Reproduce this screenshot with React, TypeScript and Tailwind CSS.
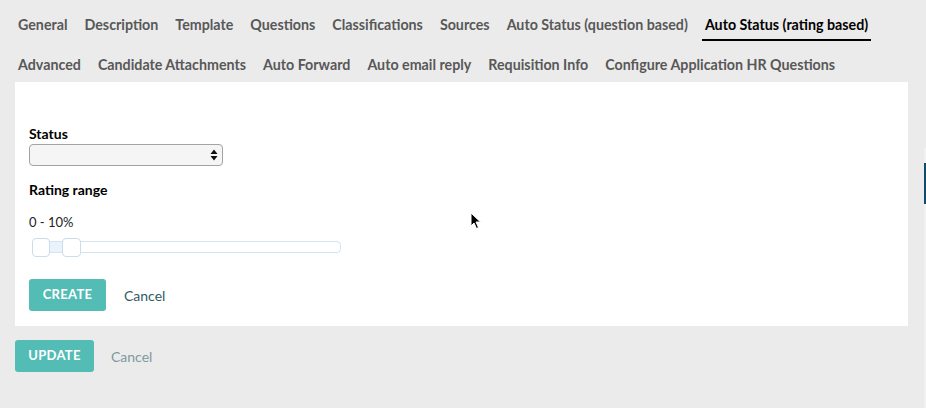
import { useState } from "react";

const rowOne = [
  "General",
  "Description",
  "Template",
  "Questions",
  "Classifications",
  "Sources",
  "Auto Status (question based)",
  "Auto Status (rating based)",
];

const rowTwo = [
  "Advanced",
  "Candidate Attachments",
  "Auto Forward",
  "Auto email reply",
  "Requisition Info",
  "Configure Application HR Questions",
];

function Tab({ label, active }: { label: string; active: boolean }) {
  return (
    <button
      type="button"
      className={`px-[3px] pb-[2px] leading-[24px] border-b-[2px] whitespace-nowrap ${
        active ? "text-black border-black" : "text-[#585858] border-transparent"
      }`}
    >
      {label}
    </button>
  );
}

function StatusSelect() {
  return (
    <div className="relative mt-[1px] w-[194px] h-[22px] rounded-[4px] border border-[#a3a3a3] bg-[#f5f5f5]">
      <svg className="absolute right-[4px] top-[4px]" width="8" height="12" viewBox="0 0 8 12">
        <path d="M4 0.5 L7.5 5 L0.5 5 Z" fill="#111" />
        <path d="M4 11.5 L7.5 7 L0.5 7 Z" fill="#111" />
      </svg>
    </div>
  );
}

function RangeSlider() {
  return (
    <div className="relative mt-[7px] ml-[3px] w-[309px] h-[19px]">
      <div className="absolute left-[1px] right-0 top-[3px] h-[12px] rounded-[4px] border border-[#d3e3f0] bg-white" />
      <div className="absolute left-[18px] w-[31px] top-[4px] h-[10px] bg-[#eaf3fb]" />
      <div className="absolute left-0 top-0 w-[18px] h-[19px] rounded-[4px] border border-[#cadced] bg-white" />
      <div className="absolute left-[30px] top-0 w-[19px] h-[19px] rounded-[4px] border border-[#cadced] bg-white" />
    </div>
  );
}

export default function App() {
  const [active] = useState("Auto Status (rating based)");

  return (
    <div
      className="relative w-[926px] h-[408px] overflow-hidden bg-[#ebebeb] text-[14px]"
      style={{ fontFamily: "Lato, 'Open Sans', sans-serif" }}
    >
      <nav className="pl-[15px] pt-[13px] font-bold text-[14.25px]">
        <div className="flex gap-x-[11px]">
          {rowOne.map((t) => (
            <Tab key={t} label={t} active={t === active} />
          ))}
        </div>
        <div className="flex gap-x-[11px] mt-[12px]">
          {rowTwo.map((t) => (
            <Tab key={t} label={t} active={t === active} />
          ))}
        </div>
      </nav>

      <section className="ml-[15px] mt-[1px] w-[893px] bg-white pl-[14px] pt-[43px] pb-[15px]">
        <label className="block font-bold text-black leading-[18px]">Status</label>
        <StatusSelect />

        <h3 className="mt-[15px] font-bold text-black leading-[18px]">Rating range</h3>
        <p className="mt-[14px] text-[13px] leading-[18px] text-[#222]">0 - 10%</p>
        <RangeSlider />

        <div className="mt-[22px] flex items-center gap-[18px]">
          <button
            type="button"
            className="w-[77px] h-[32px] rounded-[3px] bg-[#53bcb5] text-white font-bold text-[13px] tracking-[0.3px]"
          >
            CREATE
          </button>
          <button type="button" className="text-[#2f5b5f] text-[14px]">
            Cancel
          </button>
        </div>
      </section>

      <div className="ml-[15px] mt-[14px] flex items-center gap-[17px]">
        <button
          type="button"
          className="w-[79px] h-[32px] rounded-[3px] bg-[#53bcb5] text-white font-bold text-[13px] tracking-[0.3px]"
        >
          UPDATE
        </button>
        <button type="button" className="text-[#7d9a9c] text-[14px]">
          Cancel
        </button>
      </div>

      {/* sliver of side panel at right edge */}
      <div className="absolute right-0 top-[148px] w-[2px] h-[260px] bg-[#f1f1f1]">
        <div className="mt-[15px] h-[41px] bg-[#124a6e]" />
      </div>

      {/* mouse pointer */}
      <svg className="absolute left-[470px] top-[212px]" width="12" height="18" viewBox="0 0 12 18">
        <path d="M1 1 L1 14 L4 11 L6.5 16.5 L8.5 15.5 L6 10 L10.5 10 Z" fill="#000" stroke="#fff" strokeWidth="1" />
      </svg>
    </div>
  );
}
